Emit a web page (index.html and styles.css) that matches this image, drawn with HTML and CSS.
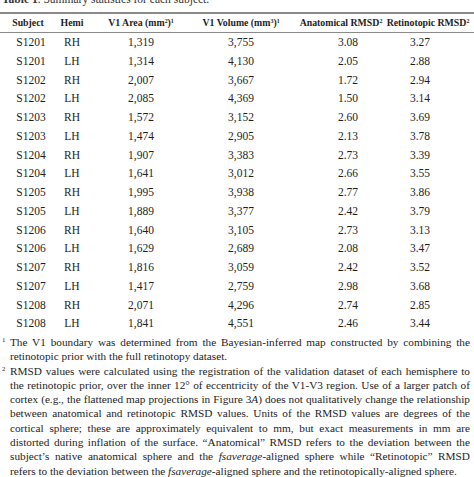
FILE: index.html
```html
<!DOCTYPE html>
<html>
<head>
<meta charset="utf-8">
<link rel="stylesheet" href="styles.css">
</head>
<body>
<div class="page">
  <p class="caption"><b>Table 1</b>. Summary statistics for each subject.</p>
  <table class="stats">
    <thead>
      <tr>
        <th class="c1">Subject</th>
        <th class="c2">Hemi</th>
        <th class="c3">V1 Area (mm<sup>2</sup>)<sup>1</sup></th>
        <th class="c4">V1 Volume (mm<sup>3</sup>)<sup>1</sup></th>
        <th class="c5">Anatomical RMSD<sup>2</sup></th>
        <th class="c6">Retinotopic RMSD<sup>2</sup></th>
      </tr>
    </thead>
    <tbody>
      <tr><td>S1201</td><td>RH</td><td>1,319</td><td>3,755</td><td>3.08</td><td>3.27</td></tr>
      <tr><td>S1201</td><td>LH</td><td>1,314</td><td>4,130</td><td>2.05</td><td>2.88</td></tr>
      <tr><td>S1202</td><td>RH</td><td>2,007</td><td>3,667</td><td>1.72</td><td>2.94</td></tr>
      <tr><td>S1202</td><td>LH</td><td>2,085</td><td>4,369</td><td>1.50</td><td>3.14</td></tr>
      <tr><td>S1203</td><td>RH</td><td>1,572</td><td>3,152</td><td>2.60</td><td>3.69</td></tr>
      <tr><td>S1203</td><td>LH</td><td>1,474</td><td>2,905</td><td>2.13</td><td>3.78</td></tr>
      <tr><td>S1204</td><td>RH</td><td>1,907</td><td>3,383</td><td>2.73</td><td>3.39</td></tr>
      <tr><td>S1204</td><td>LH</td><td>1,641</td><td>3,012</td><td>2.66</td><td>3.55</td></tr>
      <tr><td>S1205</td><td>RH</td><td>1,995</td><td>3,938</td><td>2.77</td><td>3.86</td></tr>
      <tr><td>S1205</td><td>LH</td><td>1,889</td><td>3,377</td><td>2.42</td><td>3.79</td></tr>
      <tr><td>S1206</td><td>RH</td><td>1,640</td><td>3,105</td><td>2.73</td><td>3.13</td></tr>
      <tr><td>S1206</td><td>LH</td><td>1,629</td><td>2,689</td><td>2.08</td><td>3.47</td></tr>
      <tr><td>S1207</td><td>RH</td><td>1,816</td><td>3,059</td><td>2.42</td><td>3.52</td></tr>
      <tr><td>S1207</td><td>LH</td><td>1,417</td><td>2,759</td><td>2.98</td><td>3.68</td></tr>
      <tr><td>S1208</td><td>RH</td><td>2,071</td><td>4,296</td><td>2.74</td><td>2.85</td></tr>
      <tr><td>S1208</td><td>LH</td><td>1,841</td><td>4,551</td><td>2.46</td><td>3.44</td></tr>
    </tbody>
  </table>
  <div class="notes">
    <p class="note"><sup class="mark">1</sup>The V1 boundary was determined from the Bayesian-inferred map constructed by combining the retinotopic prior with the full retinotopy dataset.</p>
    <p class="note"><sup class="mark">2</sup>RMSD values were calculated using the registration of the validation dataset of each hemisphere to the retinotopic prior, over the inner 12° of eccentricity of the V1-V3 region. Use of a larger patch of cortex (e.g., the flattened map projections in Figure 3<i>A</i>) does not qualitatively change the relationship between anatomical and retinotopic RMSD values. Units of the RMSD values are degrees of the cortical sphere; these are approximately equivalent to mm, but exact measurements in mm are distorted during inflation of the surface. “Anatomical” RMSD refers to the deviation between the subject’s native anatomical sphere and the <i>fsaverage</i>-aligned sphere while “Retinotopic” RMSD refers to the deviation between the <i>fsaverage</i>-aligned sphere and the retinotopically-aligned sphere.</p>
  </div>
</div>
</body>
</html>
```
FILE: styles.css
```css
html, body {
  margin: 0;
  padding: 0;
  background: #ffffff;
}
body {
  font-family: "Liberation Serif", "Times New Roman", serif;
  color: #1e1e1e;
  width: 474px;
  overflow: hidden;
}
.page {
  width: 474px;
}
.caption {
  margin: -8px 0 0 0;
  padding-left: 2px;
  font-size: 11.5px;
  line-height: 14px;
  height: 20px;
  color: #333;
}
.stats {
  width: 474px;
  border-collapse: collapse;
  table-layout: fixed;
  font-size: 11.5px;
}
.stats th,
.stats td {
  box-sizing: border-box;
}
.stats thead tr {
  border-top: 2px solid #8a8a8a;
  border-bottom: 1px solid #8a8a8a;
}
.stats th {
  font-weight: bold;
  height: 18px;
  padding: 0;
  text-align: center;
  line-height: 18px;
  white-space: nowrap;
  font-size: 9.8px;
}
.stats td {
  text-align: center;
  padding: 0;
  height: 18.75px;
  line-height: 18.75px;
}
.c1 { width: 52px; }
.c2 { width: 40px; }
.c3 { width: 98px; }
.c4 { width: 102px; }
.c5 { width: 92px; }
.c6 { width: 90px; }
.stats td:nth-child(1) { padding-left: 10px; }
.stats td:nth-child(5) { padding-left: 20px; }
.stats td:nth-child(6) { padding-right: 18px; }
.stats th.c1 { padding-left: 4px; }
.stats th.c5 { padding-left: 6px; }
.stats th.c6 { padding-right: 2px; }
sup {
  font-size: 0.6em;
  line-height: 0;
  vertical-align: 0.55em;
}
.notes {
  padding: 2px 4px 0 10px;
}
.note {
  margin: 0;
  font-size: 11.25px;
  line-height: 14.3px;
  text-align: justify;
  position: relative;
}
.mark {
  position: absolute;
  left: -8px;
  top: 5px;
}
```
